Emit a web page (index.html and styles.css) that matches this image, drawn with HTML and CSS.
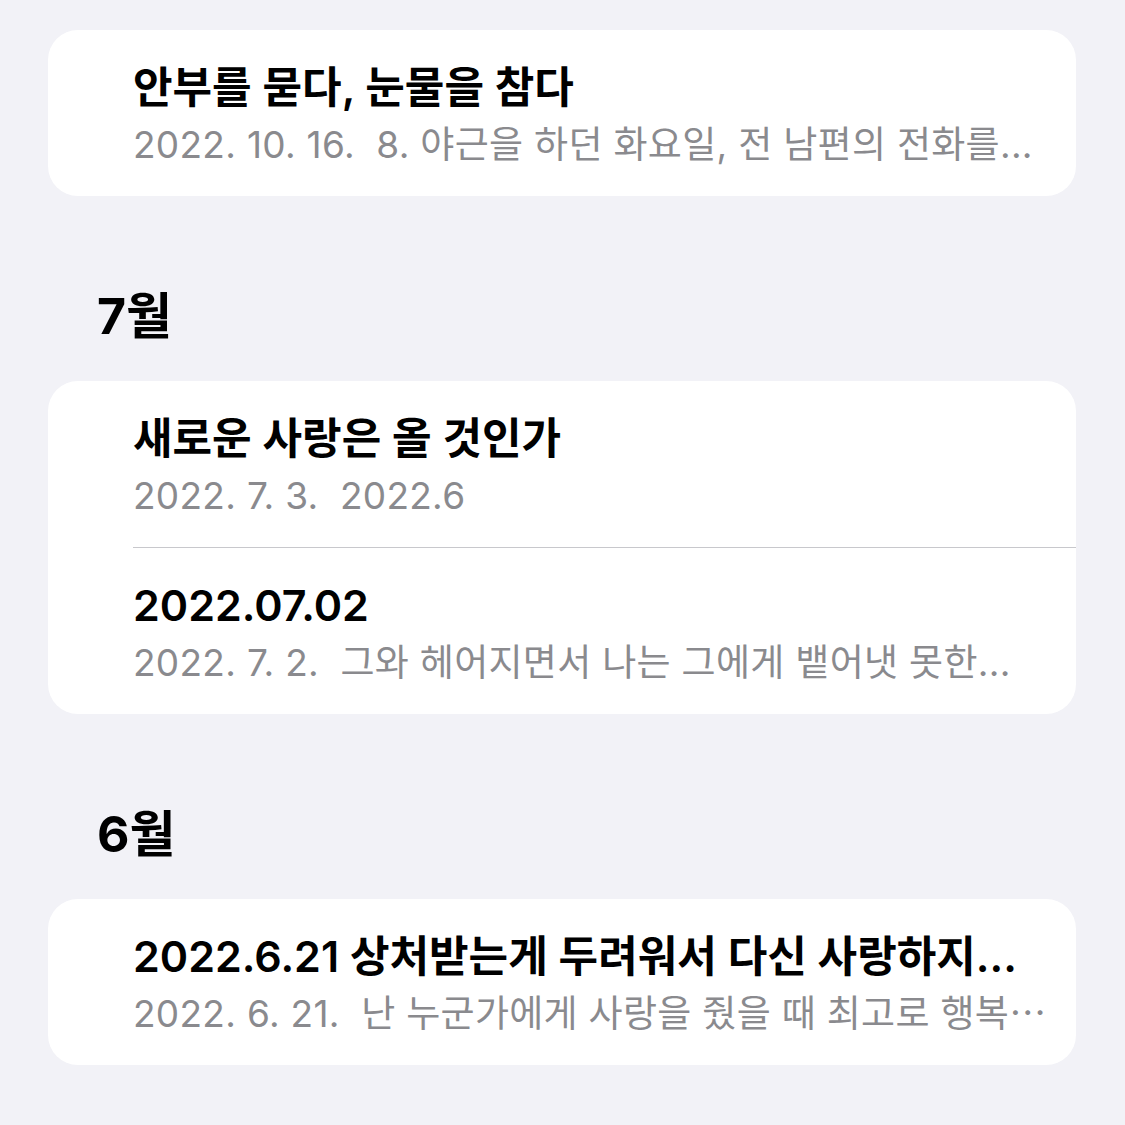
FILE: index.html
```html
<!DOCTYPE html>
<html lang="ko">
<head>
<meta charset="utf-8">
<link rel="stylesheet" href="styles.css">
</head>
<body>
<div class="page">
  <div class="card">
    <div class="row">
      <div class="title">안부를 묻다, 눈물을 참다</div>
      <div class="sub">2022. 10. 16.&nbsp; 8. 야근을 하던 화요일, 전 남편의 전화를...</div>
    </div>
  </div>

  <div class="header">7월</div>
  <div class="card">
    <div class="row">
      <div class="title">새로운 사랑은 올 것인가</div>
      <div class="sub">2022. 7. 3.&nbsp; 2022.6</div>
    </div>
    <div class="row sep">
      <div class="title">2022.07.02</div>
      <div class="sub">2022. 7. 2.&nbsp; 그와 헤어지면서 나는 그에게 뱉어냇 못한...</div>
    </div>
  </div>

  <div class="header">6월</div>
  <div class="card">
    <div class="row">
      <div class="title">2022.6.21 상처받는게 두려워서 다신 사랑하지...</div>
      <div class="sub">2022. 6. 21.&nbsp; 난 누군가에게 사랑을 줬을 때 최고로 행복⋯</div>
    </div>
  </div>
</div>
</body>
</html>
```

FILE: styles.css
```css
html, body {
  margin: 0;
  padding: 0;
  background: #f2f2f7;
}
body {
  font-family: Inter, "Noto Sans CJK KR", sans-serif;
  -webkit-font-smoothing: antialiased;
}
.page {
  padding: 30px 49px 40px 48px;
}
.card {
  background: #ffffff;
  border-radius: 30px;
  overflow: hidden;
}
.row {
  margin-left: 85px;
  padding: 31px 0 25px 0;
  height: 110px;
}
.row.sep {
  border-top: 1.5px solid #c8c8cc;
}
.title {
  font-size: 43px;
  font-weight: 600;
  line-height: 52px;
  color: #000;
  white-space: nowrap;
}
.sub {
  margin-top: 6px;
  font-size: 37px;
  font-weight: 400;
  line-height: 52px;
  color: #8a8a8e;
  white-space: nowrap;
  letter-spacing: 0.3px;
}
.header {
  margin: 92px 0 37px 49px;
  font-size: 50px;
  font-weight: 700;
  line-height: 56px;
  color: #000;
}
```
